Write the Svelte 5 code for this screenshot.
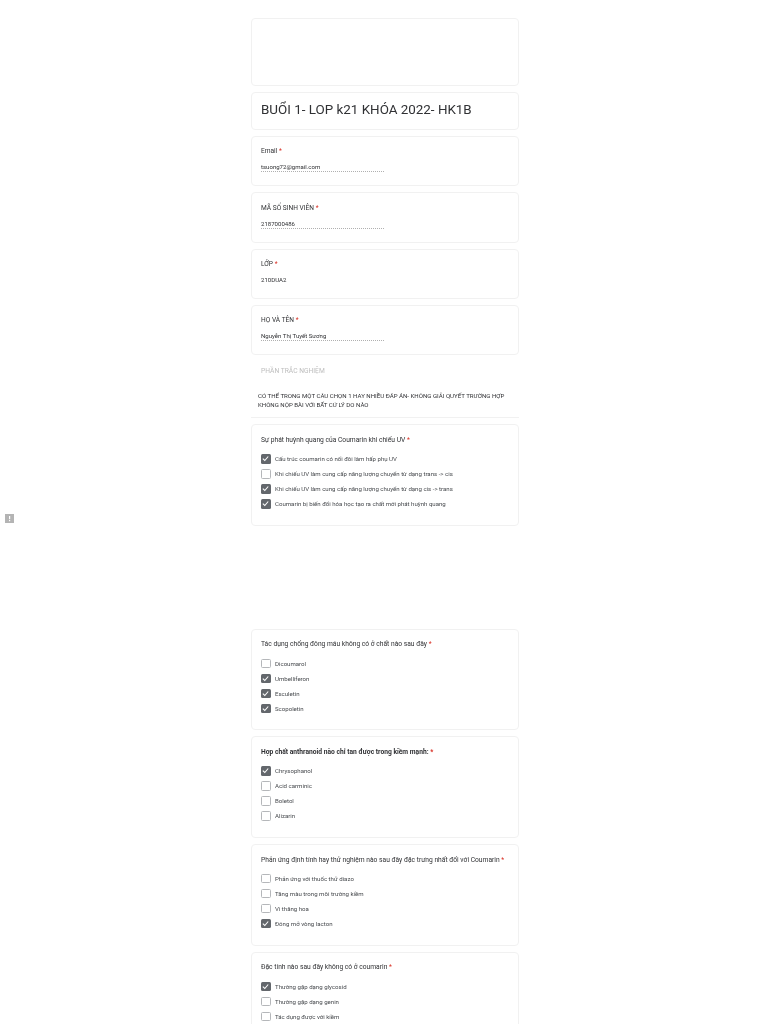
<script>
  const fields = [
    { label: "Email", value: "tsuong72@gmail.com", line: true },
    { label: "MÃ SỐ SINH VIÊN", value: "2187000486", line: true },
    { label: "LỚP", value: "210DUA2", line: false },
    { label: "HỌ VÀ TÊN", value: "Nguyễn Thị Tuyết Sương", line: true }
  ];

  const firstPage = [
    {
      title: "Sự phát huỳnh quang của Coumarin khi chiếu UV",
      options: [
        ["Cấu trúc coumarin có nối đôi làm hấp phụ UV", true],
        ["Khi chiếu UV làm cung cấp năng lượng chuyển từ dạng trans -> cis", false],
        ["Khi chiếu UV làm cung cấp năng lượng chuyển từ dạng cis -> trans", true],
        ["Coumarin bị biến đổi hóa học tạo ra chất mới phát huỳnh quang", true]
      ]
    }
  ];

  const secondPage = [
    {
      title: "Tác dụng chống đông máu không có ở chất nào sau đây",
      options: [
        ["Dicoumarol", false],
        ["Umbelliferon", true],
        ["Esculetin", true],
        ["Scopoletin", true]
      ]
    },
    {
      title: "Hợp chất anthranoid nào chỉ tan được trong kiềm mạnh:",
      bold: true,
      options: [
        ["Chrysophanol", true],
        ["Acid carminic", false],
        ["Boletol", false],
        ["Alizarin", false]
      ]
    },
    {
      title: "Phản ứng định tính hay thử nghiệm nào sau đây đặc trưng nhất đối với Coumarin",
      options: [
        ["Phản ứng với thuốc thử diazo", false],
        ["Tăng màu trong môi trường kiềm", false],
        ["Vi thăng hoa", false],
        ["Đóng mở vòng lacton", true]
      ]
    },
    {
      title: "Đặc tính nào sau đây không có ở coumarin",
      options: [
        ["Thường gặp dạng glycosid", true],
        ["Thường gặp dạng genin", false],
        ["Tác dụng được với kiềm", false]
      ]
    }
  ];
</script>

{#snippet question(q)}
  <section class="card question">
    <div class="q-title" class:bold={q.bold}>{q.title} <span class="req">*</span></div>
    <div class="options">
      {#each q.options as [text, checked]}
        <div class="option">
          <span class="box" class:checked>
            {#if checked}
              <svg viewBox="0 0 10 10" width="9" height="9"><polyline points="2,5.2 4.2,7.2 8,2.8" fill="none" stroke="#fff" stroke-width="1.2" /></svg>
            {/if}
          </span>
          <span>{text}</span>
        </div>
      {/each}
    </div>
  </section>
{/snippet}

<div class="page">
  <div class="flag">
    <svg viewBox="0 0 9 9" width="9" height="9">
      <rect width="9" height="9" fill="#b4b4b4" />
      <rect x="4" y="2" width="1.2" height="3.2" fill="#fff" />
      <rect x="4" y="6" width="1.2" height="1.2" fill="#fff" />
    </svg>
  </div>

  <main class="form">
    <div class="card banner"></div>
    <div class="card heading">BUỔI 1- LOP k21 KHÓA 2022- HK1B</div>

    {#each fields as f}
      <section class="card field">
        <div class="label">{f.label} <span class="req">*</span></div>
        <div class="value" class:line={f.line}>{f.value}</div>
      </section>
    {/each}

    <div class="section-name">PHẦN TRẮC NGHIỆM</div>
    <p class="section-desc">CÓ THỂ TRONG MỘT CÂU CHỌN 1 HAY NHIỀU ĐÁP ÁN- KHÔNG GIẢI QUYẾT TRƯỜNG HỢP KHÔNG NỘP BÀI VỚI BẤT CỨ LÝ DO NÀO</p>

    {#each firstPage as q}
      {@render question(q)}
    {/each}

    <div class="page-break"></div>

    {#each secondPage as q}
      {@render question(q)}
    {/each}
  </main>
</div>

<style>
  :global(body) {
    background: #fff;
    overflow: hidden;
  }

  .page {
    position: relative;
    height: 1024px;
    overflow: hidden;
    font-family: Roboto, "Liberation Sans", sans-serif;
    color: #303134;
    filter: blur(0.6px);
  }

  .flag {
    position: absolute;
    left: 5px;
    top: 514px;
    line-height: 0;
  }

  .form {
    width: 268px;
    margin-left: 251px;
    padding-top: 18px;
    display: flex;
    flex-direction: column;
    gap: 6px;
  }

  .card {
    box-sizing: border-box;
    flex: none;
    background: #fff;
    border: 1px solid #f1f1f1;
    border-radius: 4px;
    padding: 0 9px;
  }

  .banner {
    height: 68px;
  }

  .heading {
    height: 38px;
    display: flex;
    align-items: center;
    padding-bottom: 4px;
    font-size: 13.4px;
  }

  .field {
    height: 50.33px;
    padding-top: 10.3px;
  }

  .label {
    font-size: 6.6px;
    line-height: 9px;
  }

  .req {
    color: #d93025;
  }

  .value {
    box-sizing: border-box;
    width: 123px;
    height: 10px;
    margin-top: 6px;
    font-size: 6.05px;
    line-height: 9px;
  }

  .value.line {
    border-bottom: 1px dotted #b0b0b0;
  }

  .section-name {
    margin: 6px 0 0 10px;
    font-size: 6.7px;
    line-height: 9px;
    color: #bdbdbd;
  }

  .section-desc {
    box-sizing: border-box;
    height: 27.5px;
    margin: 8.5px 0 0;
    padding: 0 7px;
    border-bottom: 1px solid #f1f1f1;
    font-size: 6.1px;
    line-height: 9px;
  }

  .question {
    height: 101.7px;
    padding-top: 10.5px;
  }

  .q-title {
    font-size: 6.7px;
    line-height: 9px;
  }

  .q-title.bold {
    font-weight: 700;
  }

  .options {
    margin-top: 9.5px;
    display: flex;
    flex-direction: column;
    gap: 6px;
  }

  .option {
    display: flex;
    align-items: center;
    gap: 4.5px;
    height: 9px;
    font-size: 6.08px;
    color: #46494d;
  }

  .box {
    box-sizing: border-box;
    width: 9.5px;
    height: 9.5px;
    flex: none;
    border: 1px solid #b5b7ba;
    border-radius: 1.5px;
    line-height: 0;
  }

  .box.checked {
    background: #63676c;
    border: none;
  }

  .page-break {
    height: 90.8px;
    flex: none;
  }
</style>
